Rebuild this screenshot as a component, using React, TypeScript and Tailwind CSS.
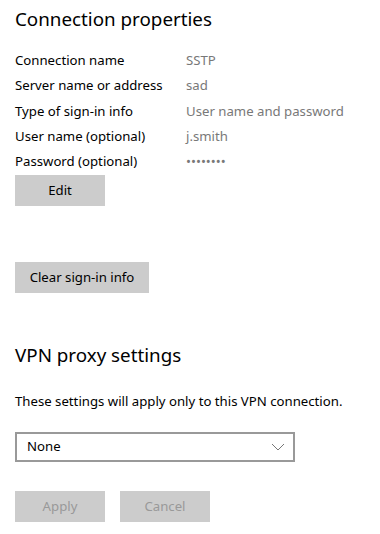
import React from "react";

const rows: [string, string][] = [
  ["Connection name", "SSTP"],
  ["Server name or address", "sad"],
  ["Type of sign-in info", "User name and password"],
  ["User name (optional)", "j.smith"],
  ["Password (optional)", "••••••••"],
];

export default function App() {
  return (
    <div
      className="w-[380px] h-[534px] bg-white text-black overflow-hidden pl-[15px]"
      style={{ fontFamily: '"Noto Sans", "Open Sans", sans-serif' }}
    >
      <div className="pt-[5px] h-[48px] text-[18.8px] leading-[28px]">Connection properties</div>
      <div className="flex flex-col">
        {rows.map(([k, v]) => (
          <div key={k} className="flex h-[25.4px] items-center text-[13.2px]">
            <div className="w-[171px]">{k}</div>
            <div className="text-[#787878]">{v}</div>
          </div>
        ))}
      </div>
      <div className="mt-[0px] flex h-[31px] w-[90px] items-center justify-center bg-[#cccccc] text-[13.2px]">
        Edit
      </div>
      <div className="mt-[56px] flex h-[31px] w-[134px] items-center justify-center bg-[#cccccc] text-[13.2px]">
        Clear sign-in info
      </div>
      <div className="mt-[48px] h-[28px] text-[18.8px] leading-[28px]">VPN proxy settings</div>
      <div className="mt-[22px] text-[13.2px] leading-[20px]">
        These settings will apply only to this VPN connection.
      </div>
      <div className="mt-[21px] flex h-[30px] w-[280px] items-center justify-between border-2 border-[#999999] pl-[10px] pr-[8px] text-[13.2px]">
        <span>None</span>
        <svg width="14" height="8" viewBox="0 0 14 8" fill="none">
          <path d="M1 1l6 6 6-6" stroke="#777" strokeWidth="1" />
        </svg>
      </div>
      <div className="mt-[29px] flex gap-[15px]">
        <div className="flex h-[31px] w-[90px] items-center justify-center bg-[#cccccc] text-[13.2px] text-[#999999]">
          Apply
        </div>
        <div className="flex h-[31px] w-[90px] items-center justify-center bg-[#cccccc] text-[13.2px] text-[#999999]">
          Cancel
        </div>
      </div>
    </div>
  );
}
